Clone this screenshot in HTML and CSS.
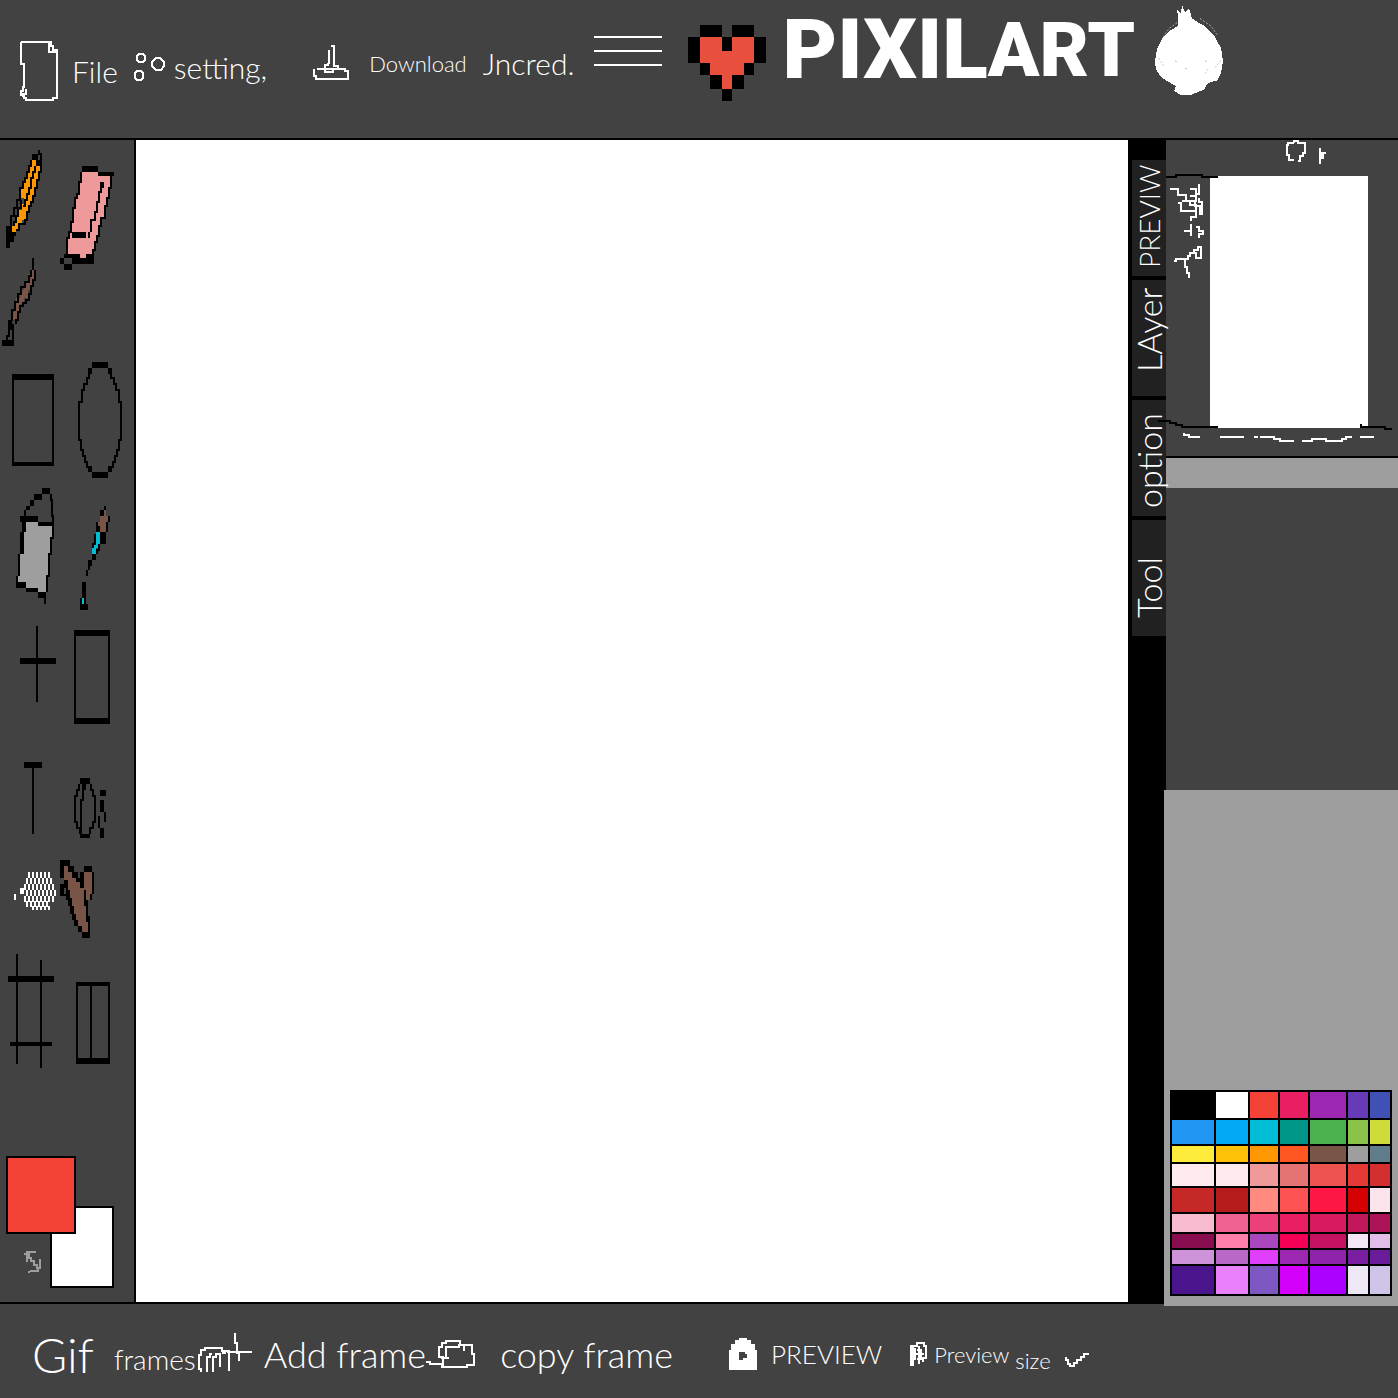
FILE: index.html
```
<!DOCTYPE html>
<html lang="en">
<head>
	<meta charset="UTF-8">
	<meta name="viewport" content="width=device-width, initial-scale=1.0">
	<title>Pixilart</title>
	<link rel="stylesheet" href="styles.css">
</head>
<body>
	<header class="topbar">
		<nav class="menu">
			<button class="menu-item file">
				<svg class="line" width="40" height="62" viewBox="6 0 120 186"><path d="M9 6h90v12h6v12h12v144h-12v6H24v-6h-6v-9H9v-12h6v-12h3V72H9V6M93 6v30h24M24 147v15h-9v9"/></svg>
				<span>File</span>
			</button>
			<button class="menu-item settings">
				<svg class="line" width="34" height="30" viewBox="0 0 102 90"><path d="M15 6h12l6 6v12l-6 6H15l-6-6V12zM66 18h12l12 12v12l-9 12H66L54 42V30zM9 57h12l6 6v15l-6 6H9l-6-6V63z"/></svg>
				<span>setting,</span>
			</button>
			<button class="menu-item download small">
				<svg class="line" width="36" height="38" viewBox="0 0 108 114"><path d="M54 6h9v60h12v9H60v9H36V63h9l3-9V18M3 75v21h6v9h96V81h-9v-6H12"/></svg>
				<span>Download</span>
			</button>
			<button class="menu-item increase">Jncred.</button>
			<button class="menu-item bars" aria-label="Menu">
				<svg class="line" width="68" height="32" viewBox="0 0 204 96"><path d="M0 6h204M0 48h204M0 90h204"/></svg>
			</button>
		</nav>
		<button class="heart" aria-label="Like">
			<svg width="78" height="76" viewBox="0 0 78 76">
				<path d="M12 0h22v12h10V0h22v12h12v26H66v12H56v14H44v12H34V64H22V50H12V38H0V12h12z"/>
				<path fill="#e94f3d" d="M12 12h22v14h10V12h22v26H56v12H44v14H34V50H22V38H12z"/>
			</svg>
		</button>
		<h1 class="logo"><span class="logo-big">PIXIL</span><span class="logo-small">ART</span></h1>
		<svg class="mascot" width="70" height="90" viewBox="0 0 70 106" preserveAspectRatio="none">
			<path fill="#fff" d="M23 14l-1-8 4 5 1-10 3 9 4-5 3 12 5 4 8 5 9 11 7 15 2 15-2 15-4 8-9 3-4 8-9 4-4 2H25l-6-5 2-5-7-5-8-6-5-9-1-9 2-15 5-12 7-9 9-6z"/>
			<path class="soft" d="M22 22l-8 7-7 12M45 17l11 9 6 10M4 64l5 9M50 82l4-7M60 75l7-10M20 67l2 1M50 67l3 1M30 76l2 0"/>
		</svg>
	</header>

	<main class="workspace">
		<aside class="toolbar">
			<div class="tools">
				<button aria-label="Pencil"><svg width="60" height="118" viewBox="0 0 180 354">
					<path fill="#ff9800" d="M96 60h12v18h12v18h-6v24h-6v24h-6v24h-6v18h-6v12h-6v18h-6v24h-12v12h-12v18h-6v6H36v-18h6v-12h6v-18h6v-18h12v-18h6v-18H60v-30h12v-30h12v-18h6V78h6z"/>
					<path d="M96 42h18v18h6v18h-12V60H96zM24 258h12v18h12v12h-6v18H30v18H18v-66z"/>
					<path class="ink" d="M117 30v12h6v36M123 78v18h-6v24h-6v24h-6v24h-6v18h-6v12h-6v18h-6v24h-6v12H57v18h-9M93 60v18h-6v18h-6v18h-6v12h-6v18h-9v36h-9v24h-9v24h-9v30M63 180v24h-9v24h-6v18h-6v12M105 78v18h-6v18h-6v30h-6v18h-6v18h-6v18h-6"/>
				</svg></button>
				<button aria-label="Eraser"><svg width="74" height="118" viewBox="180 0 222 354">
					<path fill="#ef9a9a" d="M246 96h90v48h-6v30h-6v24h-6v36h-12v24h-6v30h-6v18h-6v24h-6v12H204v-48h6v-18h6v-30h6v-42h6v-30h6v-12h6v-36h6z"/>
					<path fill="#ef9a9a" d="M240 342h18v12h-18z"/>
					<path d="M246 78h48v18h48v12h-48V96h-48zM216 276h42v18h-42zM192 342h48v12h18v-12h24v30h-66v18h-24v-18h-12v-18h12zM300 126h12v18h-12zM192 354v18h24v-18z" fill-rule="evenodd"/>
					<path class="ink" d="M243 96v30h-6v36h-6v12h-6v30h-6v42h-6v30h-6v18h-6v48M333 108v36h-6v30h-6v24h-6v36h-12v24h-6v30h-6v18h-6v24h-6v30M303 144v12h-6v30h-6v30h-6v24h-12v36M267 276v18"/>
				</svg></button>
				<button aria-label="Brush"><svg width="60" height="96" viewBox="0 354 180 288">
					<path fill="#795548" d="M90 390h12v30h-6v30h-12v24h-12v18H60v24h-6v24H36v-24h6v-24h6v-18h12v-24h12v-24h12v-24h6z"/>
					<path d="M96 354h6v36h-6zM24 540h12v12h6v66H6v-18h12v-12h6v12h12v-30H24z"/>
					<path class="ink" d="M93 390v18h-6v18h-12v15H63v21h-9v24h-9v24h-9v33M105 390v30h-6v18h-6v24h-6v18h-9v9h-9v9h-9v18h-6v24h-6v12M27 570v18h-6v12"/>
				</svg></button>
				<span></span>
				<button aria-label="Rectangle"><svg width="60" height="130" viewBox="0 642 180 390">
					<path d="M36 702h126v276H36zM42 720v246h114V720z" fill-rule="evenodd"/>
				</svg></button>
				<button aria-label="Ellipse"><svg width="74" height="130" viewBox="180 642 222 390">
					<path d="M276 666h48v18h-48zM276 996h48v18h-48zM264 684h12v18h-12zM324 684h12v18h-12zM264 978h12v18h-12zM324 978h12v18h-12z"/>
					<path class="ink" d="M267 702v12h-6v18h-9v18h-6v36h-9v114h6v30h6v18h6v18h6v15h6M333 702v12h9v18h6v18h9v36h6v114h-6v30h-6v18h-6v18h-6v15h-6"/>
				</svg></button>
				<button aria-label="Fill"><svg width="60" height="134" viewBox="0 12 180 402">
					<path fill="#9e9e9e" d="M78 126h36v12h42v66h-6v84h-12v48h-24v-12H78v-18H54v-18h6v-66h12v-66h6z"/>
					<path d="M60 108h54v18h42v12h-42v-12H78v30H66v-30h-6zM102 42h24V24h24v18h-24v18h-24zM90 60h12v18H90zM78 78h12v12H78zM60 156h12v66H60zM48 288h6v18h24v18h36v12h24v36h-6v-18h-18v-18H78v-12H48z"/>
					<path class="ink" d="M75 90v18M153 42v18h3v48h3v66h-6v48h-6v66h-6v48M57 222v66"/>
				</svg></button>
				<button aria-label="Color picker"><svg width="74" height="134" viewBox="180 12 222 402">
					<path fill="#795548" d="M312 90h6v18h6v18h-6v30h-18v-18h-6v-12h6v-18h12z"/>
					<path fill="#00bcd4" d="M288 156h12v36h-6v12h-6v18h-12v-18h6v-12h6zM246 354h6v18h-6z"/>
					<path d="M312 78h6v12h-6zM300 90h12v18h-12zM288 126h6v12h6v18h-12zM318 126h6v30h-6v36h-18v-36h18zM276 222h12v18h-12zM264 240h12v18h-6v12h-6zM258 270h6v18h-6zM246 306h12v66h6v18h-24v-36h6v18h6v-18h-6z"/>
					<path class="ink" d="M327 108v18M285 162v30h-6v12M297 192v18h-6v12"/>
				</svg></button>
				<button aria-label="Move"><svg width="60" height="124" viewBox="0 414 180 372">
					<path d="M108 438h6v96h54v18h-54v114h-6V552H60v-18h48z"/>
				</svg></button>
				<button aria-label="Select"><svg width="74" height="124" viewBox="180 414 222 372">
					<path d="M222 450h108v282H222zM228 468v246h96V468z" fill-rule="evenodd"/>
				</svg></button>
				<button aria-label="Text tool"><svg width="60" height="108" viewBox="0 786 180 324">
					<path d="M72 846h54v18h-24v198h-6V864H72z"/>
				</svg></button>
				<button aria-label="Lasso"><svg width="74" height="108" viewBox="180 786 222 324">
					<path d="M240 894h30v18h-12v18h-12v-18h-6zM240 1062h30v12h-30zM300 930h18v18h-18zM300 960h12v36h-12zM300 1044h12v30h-12z"/>
					<path class="ink" d="M237 912v18h-6v18h-6v78h6v18h9v18M273 912v18h6v18h6v78h-6v18h-9v18M249 930v30h-6v102M315 996v30M297 1008v36"/>
				</svg></button>
				<button aria-label="Spray"><svg width="60" height="98" viewBox="0 30 180 294">
					<path class="spray" d="M84 105h66M78 123h78M72 141h90M78 159h90M72 177h90M78 192h72"/>
					<path class="spray thin" d="M96 204h54"/>
					<path fill="#fff" d="M60 144h12v18H60zM42 162h6v18h-6z"/>
				</svg></button>
				<button aria-label="Smudge"><svg width="74" height="98" viewBox="180 30 222 294">
					<path d="M180 60h30v18h12v18h12v18h6V96h12V78h24v18h6v66h-6v18h-12v48h6v66h-24v-18h-12v-18h-12v-18h-6v-18h-6v-24h-6v-18h-6v-12h-18v-36h12v-18h-12z"/>
					<path fill="#795548" d="M192 78h12v18h12v18h12v12h12v18h6v-30h6V96h24v18h6v48h-12v18h-12v-18h-6v36h6v48h6v30h-18v-18h-12v-18h-6v-18h-6v-24h-6v-24h-6v-24h-6v-30h-12z"/>
					<path fill="#424242" d="M192 144h6v18h-6z"/>
					<path class="ink" d="M279 96v66M249 108v36M255 150v30M261 180v48M267 228v54"/>
				</svg></button>
				<button aria-label="Crop"><svg width="60" height="130" viewBox="0 324 180 390">
					<path d="M48 342h6v66h66v-48h6v48h36v18h-36v180h30v12h-30v66h-6v-66H54v54h-6v-54H30v-12h18V426H24v-18h24zM54 426v180h66V426z" fill-rule="evenodd"/>
				</svg></button>
				<button aria-label="Mirror"><svg width="74" height="130" viewBox="180 324 222 390">
					<path d="M228 426h102v246H228zM234 438v216h36V438zM276 438v216h48V438z" fill-rule="evenodd"/>
				</svg></button>
			</div>
			<div class="colors">
				<button class="color-main" aria-label="Primary color"></button>
				<div class="color-row">
					<button class="swap" aria-label="Swap colors"><svg width="18" height="24" viewBox="0 0 54 72"><path fill="none" stroke="#9e9e9e" stroke-width="6" d="M36 9H9v30M0 15h15v12h6v9h9v12h9v12M48 30v27h-6v9H18M12 69h6"/></svg></button>
					<button class="color-second" aria-label="Secondary color"></button>
				</div>
			</div>
		</aside>

		<section class="canvas"></section>

		<div class="tabs">
			<button class="tab">PREVIW</button>
			<button class="tab tab-big tab-layer">LAyer</button>
			<button class="tab tab-big">option</button>
			<button class="tab tab-big tab-tool">Tool</button>
		</div>

		<aside class="panels">
			<section class="preview">
				<svg width="232" height="316" viewBox="138 0 696 948">
					<path fill="#fff" d="M270 108h474v756H270z"/>
					<path class="ink" d="M138 111h30v-6h78v6h48M114 843h36v6h18v6h18v6h108M723 852v9h72v6h21"/>
					<path class="line" d="M522 9h-18v6h-3v30h6v15h15M534 63h6v-15h9V39h6V9h-21V3h-12V9M600 24v48M603 36v18h6V39h9M192 879v6h15v6h33M300 891h72M402 891h12M420 891h42v6h18v6h42M546 903h30v-6h42v6h48v-6h12v-6h18M720 891h42"/>
					<path class="line" d="M150 147h24v18h24v18h30v-15h-18M174 189h9v24h45v-18h-18v-12h-24M210 147h18v15h9v-30M225 180v18h15v24h6v-36h-9v-12M228 213v18h-15v12M192 273h24M213 252v36M228 261h9v12h12v9h-12v12M162 363h6v-6h36v-9h6v-9h12v-9h12v-9h9v33h-15v-15h-15M195 357v24h6v18h6v15"/>
				</svg>
			</section>
			<section class="panel-head"></section>
			<section class="panel-body"></section>
			<section class="palette-panel">
				<div class="palette" id="palette"></div>
			</section>
		</aside>
	</main>

	<footer class="framebar">
		<span class="gif">Gif</span>
		<span class="frames">frames</span>
		<button class="frame-btn add">
			<svg class="line" width="56" height="42" viewBox="0 0 168 126"><path d="M15 117v-9H9V66h6V51h12v-6h51v9h21v60M33 117V72h9v-9h6M51 117V72h9v-9h12v39M78 60h12M93 57h75M117 0v30h6v30h6v24"/></svg>
			<span>Add frame</span>
		</button>
		<button class="frame-btn copy">
			<svg class="line" width="50" height="30" viewBox="30 0 150 90"><path d="M30 69h12v6h36v9h75v-6h21v-33h-6V18h-24v12M81 84V54H69V24h9V12h12V6h42v12M90 54V24h39v-6h15v18M75 57h24"/></svg>
			<span>copy frame</span>
		</button>
		<button class="frame-btn play">
			<svg width="28" height="32" viewBox="0 0 28 32"><path fill="#fff" d="M10 0h8v2h4v4h4v6h2v20H0V12h2V6h4V2h4z"/><path fill="#424242" d="M10 14h6v2h2v4h-4v2h-4z"/></svg>
			<span>PREVIEW</span>
		</button>
		<button class="frame-btn size">
			<svg class="line" width="18" height="26" viewBox="0 0 54 78"><path d="M3 12v60h6V15h12V6h21v9h6v36h-9v12M15 21v36M21 27h12v27H21M27 15v54M9 39h33"/></svg>
			<span>Preview</span>
			<span class="low">size</span>
			<svg class="line low check" width="24" height="16" viewBox="0 0 72 48"><path d="M3 15v9h6v12h6v6h12v-9h9v-9h12v-9h9V6h15"/></svg>
		</button>
	</footer>

	<script>
		const colors = [
			'#000000','#ffffff','#f44336','#e91e63','#9c27b0','#673ab7','#3f51b5',
			'#2196f3','#03a9f4','#00bcd4','#009688','#4caf50','#8bc34a','#cddc39',
			'#ffeb3b','#ffc107','#ff9800','#ff5722','#795548','#9e9e9e','#607d8b',
			'#ffebee','#ffebee','#ef9a9a','#e57373','#ef5350','#e53935','#d32f2f',
			'#c62828','#b71c1c','#ff8a80','#ff5252','#ff1744','#d50000','#fce4ec',
			'#f8bbd0','#f06292','#ec407a','#e91e63','#d81b60','#c2185b','#ad1457',
			'#880e4f','#ff80ab','#ab47bc','#f50057','#c51162','#f3e5f5','#e1bee7',
			'#ce93d8','#ba68c8','#e040fb','#9c27b0','#8e24aa','#7b1fa2','#6a1b9a',
			'#4a148c','#ea80fc','#7e57c2','#d500f9','#aa00ff','#ede7f6','#d1c4e9'
		]
		const palette = document.querySelector('#palette')

		colors.forEach(color => {
			let swatch = document.createElement('button')
			swatch.className = 'swatch'
			swatch.style.background = color
			swatch.setAttribute('aria-label', color)
			palette.appendChild(swatch)
		})

		palette.addEventListener('click', event => {
			if(event.target.classList.contains('swatch')){
				document.querySelector('.color-main').style.background = event.target.style.background
			}
		})
	</script>
</body>
</html>
```
FILE: styles.css
```
:root{
	--bar: #424242;
	--tab: #212121;
	--light: #9e9e9e;
}

*{
	box-sizing: border-box;
}

body{
	margin: 0;
	min-height: 100vh;
	display: flex;
	flex-direction: column;
	background: var(--bar);
	color: #fff;
	font-family: Lato, "Liberation Sans", sans-serif;
	font-weight: 300;
}

button{
	display: block;
	margin: 0;
	padding: 0;
	border: 0;
	background: none;
	color: inherit;
	font: inherit;
	cursor: pointer;
}

svg{
	display: block;
	flex: none;
	overflow: visible;
	shape-rendering: crispEdges;
}

.line{
	fill: none;
	stroke: #fff;
	stroke-width: 6;
}

.ink{
	fill: none;
	stroke: #000;
	stroke-width: 6;
}

/* top bar */
.topbar{
	height: 140px;
	padding: 0 20px 12px;
	border-bottom: 2px solid #000;
	display: flex;
	align-items: center;
}

.menu{
	display: flex;
	align-items: center;
	font-size: 30px;
}

.menu-item{
	display: flex;
	align-items: center;
	gap: 12px;
	white-space: nowrap;
}

.file{
	margin-top: 16px;
}

.settings{
	margin: 8px 0 0 16px;
	gap: 6px;
}

.download{
	margin-left: 46px;
	gap: 20px;
}

.small{
	font-size: 22px;
}

.increase{
	margin-left: 16px;
}

.bars{
	margin: -24px 0 0 20px;
}

.heart{
	margin-left: 26px;
}

.logo{
	margin: 0 0 0 16px;
	align-self: flex-start;
	display: flex;
	align-items: center;
	font-family: Roboto, "Liberation Sans", sans-serif;
	font-weight: 900;
	line-height: 92px;
}

.logo-big{
	font-size: 84px;
	line-height: 100px;
}

.logo-small{
	font-size: 76px;
}

.mascot{
	margin: 4px 0 0 20px;
	align-self: flex-start;
}

.soft{
	fill: none;
	stroke: #bbb;
	stroke-width: 1;
	stroke-dasharray: 2 2;
}

/* workspace */
.workspace{
	flex: 1;
	display: flex;
}

.toolbar{
	width: 136px;
	border-right: 2px solid #000;
	display: flex;
	flex-direction: column;
	justify-content: space-between;
}

.tools{
	display: grid;
	grid-template-columns: 60px 1fr;
}

.spray{
	stroke: #fff;
	stroke-width: 18;
	stroke-dasharray: 6 6;
}

.thin{
	stroke-width: 12;
}

.colors{
	padding: 0 20px 14px 6px;
}

.color-main{
	position: relative;
	width: 70px;
	height: 78px;
	border: 2px solid #000;
	background: #f44336;
}

.color-row{
	display: flex;
	justify-content: space-between;
	align-items: center;
	margin-top: -28px;
}

.swap{
	padding: 28px 0 0 18px;
}

.color-second{
	width: 64px;
	height: 82px;
	border: 2px solid #000;
	background: #fff;
}

.canvas{
	flex: 1;
	background: #fff;
}

.tabs{
	width: 38px;
	padding: 20px 0 0 4px;
	background: #000;
	display: flex;
	flex-direction: column;
	gap: 4px;
}

.tab{
	width: 34px;
	height: 116px;
	padding: 8px 0;
	background: var(--tab);
	font-size: 28px;
	line-height: 34px;
	text-align: left;
	writing-mode: vertical-rl;
	transform: rotate(180deg);
}

.tab-big{
	font-size: 34px;
}

.tab-layer{
	padding-top: 24px;
}

.tab-tool{
	padding-top: 18px;
}

/* right side */
.panels{
	width: 232px;
	display: flex;
	flex-direction: column;
}

.preview{
	position: relative;
	height: 318px;
	border-bottom: 2px solid #000;
}

.panel-head{
	height: 30px;
	background: var(--light);
}

.panel-body{
	height: 302px;
}

.palette-panel{
	position: relative;
	flex: 1;
	margin: 0 0 -4px -2px;
	padding: 6px;
	padding-bottom: 10px;
	background: var(--light);
	display: flex;
	align-items: flex-end;
}

.palette{
	flex: 1;
	display: grid;
	grid-template-columns: 42fr 32fr 28fr 28fr 36fr 20fr 20fr;
	grid-template-rows: 26px 24px 16px 22px 24px 18px 14px 14px 28px;
	gap: 2px;
	padding: 2px;
	background: #000;
}

/* frames */
.framebar{
	height: 96px;
	padding: 6px 32px 0;
	border-top: 2px solid #000;
	display: flex;
	align-items: center;
	white-space: nowrap;
	font-size: 36px;
}

.gif{
	font-size: 48px;
}

.frames{
	margin: 10px 0 0 20px;
	font-size: 28px;
}

.frame-btn{
	display: flex;
	align-items: center;
	gap: 12px;
}

.copy{
	gap: 24px;
}

.play{
	margin-left: 56px;
	gap: 14px;
	font-size: 26px;
}

.size{
	margin-left: 28px;
	gap: 6px;
	font-size: 22px;
}

.low{
	margin-top: 12px;
}

.check{
	margin-left: 8px;
}
```
